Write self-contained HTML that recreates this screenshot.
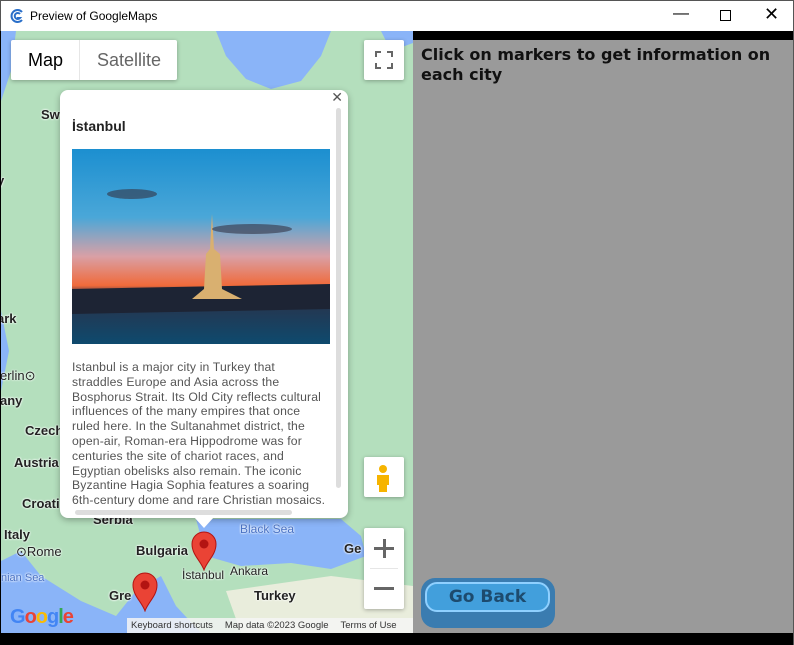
<!DOCTYPE html>
<html><head><meta charset="utf-8"><style>
*{margin:0;padding:0;box-sizing:border-box}
body{width:794px;height:645px;overflow:hidden;background:#000;font-family:"Liberation Sans",sans-serif;position:relative}
.title{position:absolute;left:0;top:0;width:794px;height:31px;background:#fff;border:1px solid #555;border-bottom:none}
.title span{position:absolute;left:29px;top:8px;font-size:12px;color:#000}
.map{position:absolute;left:1px;top:31px;width:412px;height:602px;background:#b4dfbd;overflow:hidden}
.right{position:absolute;left:413px;top:40px;width:380px;height:593px;background:#9a9a9a}
.right h1{position:absolute;left:8px;top:5px;width:370px;font:bold 16px "DejaVu Sans",sans-serif;color:#111;line-height:20px;letter-spacing:0}
.btn{position:absolute;left:8px;top:538px;width:134px;height:50px;border-radius:14px;background:#3a7cb0}
.btn div{position:absolute;left:4px;top:4px;width:125px;height:30px;border-radius:12px;background:#429fdc;border:2px solid #8fd0ff;text-align:center;font:bold 17px "DejaVu Sans",sans-serif;color:#1d4b6e;line-height:26px}
.ctl{position:absolute;background:#fff;box-shadow:0 1px 4px rgba(0,0,0,.3);border-radius:2px}
.lbl{position:absolute;font-weight:bold;font-size:13px;color:#222;text-shadow:0 0 2px #fff,0 0 2px #fff}
.pop{position:absolute;width:288px;height:428px;background:#fff;border-radius:8px;box-shadow:0 2px 7px rgba(0,0,0,.3)}
.pop p{position:absolute;left:12px;top:270px;white-space:nowrap;font-size:12.2px;letter-spacing:0.15px;line-height:14.8px;color:#555}
</style></head><body>
<div class="title"><svg style="position:absolute;left:9px;top:8px" width="14" height="14" viewBox="0 0 14 14"><path d="M12 3 A6 6 0 1 0 12 11 M10 5 A3 3 0 1 0 10 9 L7 9" fill="none" stroke="#2a6fc9" stroke-width="2"/></svg><span>Preview of GoogleMaps</span>
<span style="left:672px;top:4px;font-size:16px">—</span>
<div style="position:absolute;left:719px;top:9px;width:11px;height:11px;border:1px solid #000"></div>
<span style="left:763px;top:3px;font-size:18px">✕</span></div>
<div class="map">
<svg width="412" height="602" style="position:absolute;left:0;top:0">
<g fill="#8ab4f8">
<path d="M215 0 L330 0 L320 25 L300 50 L270 58 L245 48 L225 25 Z"/>
<path d="M380 0 L412 0 L412 12 L390 20 Z"/>
<path d="M0 0 L15 0 L10 40 L0 70 Z"/>
<path d="M0 280 L8 320 L0 360 Z"/>
<path d="M0 530 L20 520 L40 545 L80 570 L115 585 L135 560 L160 545 L175 575 L200 602 L0 602 Z"/>
<path d="M195 488 L340 488 L360 505 L365 525 L330 538 L290 532 L240 535 L205 525 Z"/>
</g>
<path d="M225 560 L330 545 L412 555 L412 602 L240 602 Z" fill="#e9eddc"/>
</svg>
<div class="ctl" style="left:10px;top:9px;width:166px;height:40px"><span style="position:absolute;left:17px;top:10px;font-size:18px;color:#000">Map</span><div style="position:absolute;left:68px;top:0;width:1px;height:40px;background:#e6e6e6"></div><span style="position:absolute;left:86px;top:10px;font-size:18px;color:#666">Satellite</span></div>
<div class="ctl" style="left:363px;top:9px;width:40px;height:40px"><svg width="40" height="40"><path d="M12 17V12H17M23 12H28V17M28 23V28H23M17 28H12V23" fill="none" stroke="#666" stroke-width="2"/></svg></div>
<div class="ctl" style="left:363px;top:426px;width:40px;height:40px"><svg width="40" height="40"><circle cx="19" cy="12" r="4" fill="#f6b400"/><path d="M13 18H25V28H23V35H15V28H13Z" fill="#f6b400"/></svg></div>
<div class="ctl" style="left:363px;top:497px;width:40px;height:81px"><div style="position:absolute;left:10px;top:19px;width:20px;height:3px;background:#666"></div><div style="position:absolute;left:18.5px;top:11px;width:3px;height:19px;background:#666"></div><div style="position:absolute;left:6px;top:40px;width:28px;height:1px;background:#e6e6e6"></div><div style="position:absolute;left:10px;top:59px;width:20px;height:3px;background:#666"></div></div>
<div class="lbl" style="left:40px;top:76px">Sw</div>
<div class="lbl" style="left:-4px;top:142px">y</div>
<div class="lbl" style="left:-4px;top:280px">ark</div>
<div class="lbl" style="left:-1px;top:337px;font-weight:normal">erlin⊙</div>
<div class="lbl" style="left:-1px;top:362px">any</div>
<div class="lbl" style="left:24px;top:392px">Czech</div>
<div class="lbl" style="left:13px;top:424px">Austria</div>
<div class="lbl" style="left:21px;top:465px">Croati</div>
<div class="lbl" style="left:92px;top:481px">Serbia</div>
<div class="lbl" style="left:3px;top:496px">Italy</div>
<div class="lbl" style="left:15px;top:513px;font-weight:normal">⊙Rome</div>
<div class="lbl" style="left:0px;top:541px;font-weight:normal;color:#4a72c4;font-size:11px">nian Sea</div>
<div class="lbl" style="left:135px;top:512px">Bulgaria</div>
<div class="lbl" style="left:108px;top:557px">Gre</div>
<div class="lbl" style="left:181px;top:537px;font-weight:normal;font-size:12px">İstanbul</div>
<div class="lbl" style="left:229px;top:533px;font-weight:normal;font-size:12px">Ankara</div>
<div class="lbl" style="left:253px;top:557px">Turkey</div>
<div class="lbl" style="left:239px;top:491px;font-weight:normal;color:#4a72c4;font-size:12px">Black Sea</div>
<div class="lbl" style="left:343px;top:510px">Ge</div>
<svg style="position:absolute;left:190px;top:500px" width="26" height="40"><path d="M13 39 C10 30 1 24 1 13 A12 12 0 0 1 25 13 C25 24 16 30 13 39Z" fill="#ea4335" stroke="#b31412"/><circle cx="13" cy="13" r="4.5" fill="#b31412"/></svg>
<svg style="position:absolute;left:131px;top:541px" width="26" height="40"><path d="M13 39 C10 30 1 24 1 13 A12 12 0 0 1 25 13 C25 24 16 30 13 39Z" fill="#ea4335" stroke="#b31412"/><circle cx="13" cy="13" r="4.5" fill="#b31412"/></svg>
<div style="position:absolute;left:9px;top:575px;font-size:20px;font-weight:bold;letter-spacing:-1px"><span style="color:#4285f4">G</span><span style="color:#ea4335">o</span><span style="color:#fbbc05">o</span><span style="color:#4285f4">g</span><span style="color:#34a853">l</span><span style="color:#ea4335">e</span></div>
<div style="position:absolute;left:126px;top:587px;width:286px;height:15px;background:rgba(245,245,245,.85);font-size:9.5px;color:#333;line-height:15px;white-space:nowrap"><span style="margin-left:4px">Keyboard shortcuts</span><span style="margin-left:12px">Map data ©2023 Google</span><span style="margin-left:12px">Terms of Use</span></div>
<div class="pop" style="left:59px;top:59px">
<span style="position:absolute;right:5px;top:-1px;font-size:14px;color:#555">✕</span>
<div style="position:absolute;left:12px;top:28px;font-size:14px;font-weight:bold;color:#222">İstanbul</div>
<svg style="position:absolute;left:12px;top:59px" width="258" height="195"><defs><linearGradient id="s" x1="0" y1="0" x2="0" y2="1"><stop offset="0" stop-color="#1c8fd0"/><stop offset=".35" stop-color="#4aa7d8"/><stop offset=".55" stop-color="#d9a0a6"/><stop offset=".7" stop-color="#f06a3a"/><stop offset=".75" stop-color="#2b3148"/><stop offset="1" stop-color="#0e4a6e"/></linearGradient></defs><rect width="258" height="195" fill="url(#s)"/><path d="M0 140 L258 135 L258 160 L0 165Z" fill="#1d2434"/><path d="M140 65 L142 100 L148 105 L150 140 L170 150 L120 150 L132 140 L134 105 L138 100Z" fill="#d9b070"/><ellipse cx="180" cy="80" rx="40" ry="5" fill="#334" opacity=".6"/><ellipse cx="60" cy="45" rx="25" ry="5" fill="#334" opacity=".6"/></svg>
<p>Istanbul is a major city in Turkey that<br>straddles Europe and Asia across the<br>Bosphorus Strait. Its Old City reflects cultural<br>influences of the many empires that once<br>ruled here. In the Sultanahmet district, the<br>open-air, Roman-era Hippodrome was for<br>centuries the site of chariot races, and<br>Egyptian obelisks also remain. The iconic<br>Byzantine Hagia Sophia features a soaring<br>6th-century dome and rare Christian mosaics.</p>
<div style="position:absolute;left:276px;top:18px;width:5px;height:380px;background:#ddd;border-radius:3px"></div>
<div style="position:absolute;left:15px;top:420px;width:217px;height:5px;background:#ddd;border-radius:3px"></div>
<div style="position:absolute;left:134px;top:427px;width:0;height:0;border-left:10px solid transparent;border-right:10px solid transparent;border-top:11px solid #fff"></div>
</div>
</div>
<div class="right"><h1>Click on markers to get information on each city</h1><div class="btn"><div>Go Back</div></div></div>
<div style="position:absolute;left:793px;top:31px;width:1px;height:614px;background:#555"></div>
</body></html>
